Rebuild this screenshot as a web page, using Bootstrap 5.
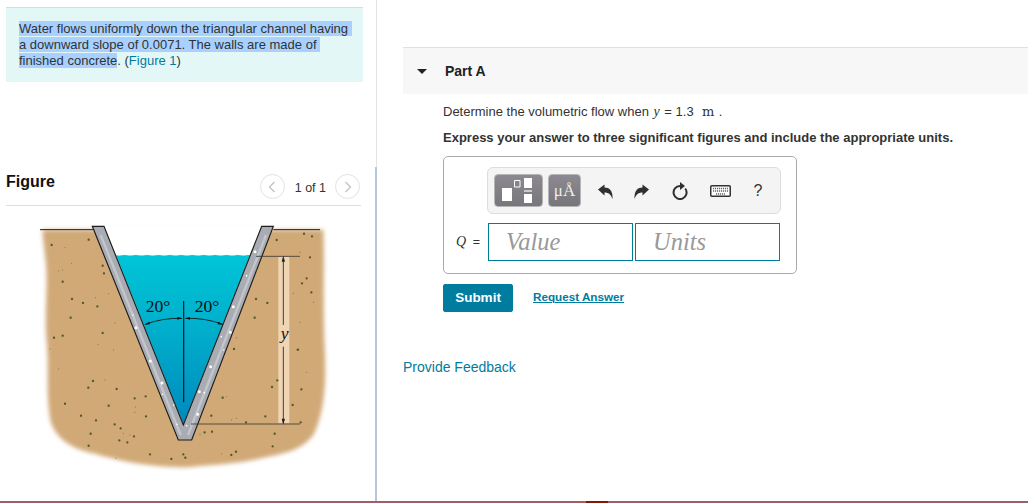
<!DOCTYPE html>
<html lang="en">
<head>
<meta charset="utf-8">
<title>Part A</title>
<link href="https://cdn.jsdelivr.net/npm/bootstrap@5.3.0/dist/css/bootstrap.min.css" rel="stylesheet">
<style>
html,body{height:503px;overflow:hidden;background:#fff}
body{font-family:"Liberation Sans",Arial,sans-serif;font-size:13px;line-height:16px;color:#333}
a{color:#007c9e;text-decoration:none}
.page-wrap{height:503px;border-bottom:2px solid #a55c64;position:relative}
.bar-accent{position:absolute;left:586px;bottom:-2px;width:22px;height:2px;background:#8a1500}
.left-pane{width:377px;flex:none}
.intro-zone{height:167px;padding:7px 13px 0 6px;border-right:1px solid #e3e3e3}
.intro-box{height:75px;background:#e3f7f6;border-top:1px solid #dcdcdc;padding:13px 8px 0 13px}
.sel{background:#a8d1ff}
.figure-zone{height:334px;padding:0 14px 0 6px;border-right:2px solid #b9c9dc}
.figure-head{height:39px;border-bottom:1px solid #ddd;padding-top:6px}
.figure-title{font-size:16px;font-weight:700;color:#111;line-height:18px}
.pager-dot{width:25px;height:25px;border:1px solid #e2e2e2;border-radius:50%;color:#bbb;display:flex;align-items:center;justify-content:center}
.pager-text{margin:2px 9px 0 10px;font-size:12.500px;line-height:25px}
.pager-box{margin-top:1px;margin-right:1px}
.figure-svg{display:block;margin:9px 0 0 24px}
.right-pane{padding:47px 0 0 26px}
.part-head{height:47px;background:#f7f7f7;border-top:1px solid #e0e0e0;padding-left:14px}
.part-tri{width:0;height:0;border-left:5.500px solid transparent;border-right:5.500px solid transparent;border-top:5px solid #222;margin-right:17px}
.part-title{font-weight:700;color:#222;font-size:14px;margin-left:1px}
.part-body{padding:10px 0 0 40px}
.q-line{margin:0 0 10px;line-height:16px}
.q-bold{font-weight:700;margin:0 0 10px;line-height:16px;color:#333}
.m-serif{font-family:"Liberation Serif",serif;font-style:italic;font-size:14px;margin:0 1px}
.m-unit{font-family:"DejaVu Serif","Liberation Serif",serif;font-size:13px;margin:0 1px}
.answer-box{width:354px;height:118px;border:1px solid #aaa;border-radius:5px;padding:10px 15px 0 43px}
.tool-bar{width:294px;height:47px;background:#f4f4f4;border:1px solid #ddd;border-radius:6px;padding:6px 0 0 6px}
.tool-btn{height:33px;border:1px solid #b5b5b5;border-radius:4px;background:linear-gradient(#8c8a90,#77767b);padding:0;display:flex;align-items:center;justify-content:center;color:#eee}
.tool-a{width:49px}
.tool-b{width:33px;margin-left:5px;font-family:"Liberation Serif",serif;font-size:17px;line-height:1}
.tool-set{margin:-5px 0 0 17px;width:166px}
.tool-q{font-size:16px;color:#333;width:12px}
.q-label{width:44px;margin-left:-43px;text-align:right;padding-right:8px;font-size:12.500px;white-space:nowrap;word-spacing:2px}
.entry-row{margin-top:9px}
.entry-cell{width:145px;height:38px;border:1px solid #007c9e;font-family:"Liberation Serif",serif;font-style:italic;font-size:24.500px;line-height:36px;color:#999;padding-left:17px}
.entry-gap{margin-left:2px}
.submit-btn{--bs-btn-bg:#007c9e;--bs-btn-color:#fff;--bs-btn-border-color:#007c9e;--bs-btn-hover-bg:#007c9e;--bs-btn-hover-border-color:#007c9e;--bs-btn-hover-color:#fff;width:70px;height:28px;padding:0;font-size:13.500px;font-weight:700;border-radius:2px;line-height:26px}
.request-link{font-size:11.700px;font-weight:700;text-decoration:underline;margin-left:20px;margin-top:5px}
.action-row{margin-top:10px}
.feedback{display:block;font-size:14px;line-height:18px;margin:46px 0 0 -40px}
.fig-label{font-family:"Liberation Serif",serif;font-size:53px;fill:#111}
</style>
</head>
<body>
<div class="page-wrap d-flex">
  <div class="left-pane">
    <div class="intro-zone">
      <div class="intro-box">
        <span class="sel">Water flows uniformly down the triangular channel having&nbsp;<br>a downward slope of 0.0071. The walls are made of&nbsp;<br>finished concrete</span>. (<a href="#">Figure 1</a>)
      </div>
    </div>
    <div class="figure-zone">
      <div class="figure-head d-flex justify-content-between">
        <div class="figure-title">Figure</div>
        <div class="pager-box d-flex align-items-start">
          <div class="pager-dot"><svg width="8" height="12" viewBox="0 0 8 12"><path d="M6.500 1 1.500 6l5 5" fill="none" stroke="#c4c4c4" stroke-width="1.400"/></svg></div>
          <div class="pager-text">1 of 1</div>
          <div class="pager-dot"><svg width="8" height="12" viewBox="0 0 8 12"><path d="M1.500 1l5 5-5 5" fill="none" stroke="#c4c4c4" stroke-width="1.400"/></svg></div>
        </div>
      </div>
      <svg class="figure-svg" width="300" height="270" viewBox="0 0 900 810">
        <defs>
          <linearGradient id="wat" x1="0" y1="0" x2="0" y2="1"><stop offset="0" stop-color="#00c5d8"/><stop offset=".45" stop-color="#00aecb"/><stop offset="1" stop-color="#0089bd"/></linearGradient>
          <filter id="soft" x="-5%" y="-5%" width="110%" height="110%"><feGaussianBlur stdDeviation="6"/></filter>
        </defs>
        <path d="M38 44H880C884 150 878 250 884 400C890 520 880 600 850 660C810 710 760 715 700 728C640 745 560 748 480 756C380 760 280 742 190 715C120 700 80 670 62 620C46 540 58 470 50 380C42 300 56 200 46 130C42 90 38 70 38 44Z" fill="#d0a977" filter="url(#soft)"/>
        <path d="M222 34H695L460 630Z" fill="#fff"/>
        <path d="M258 120H660L460 628Z" fill="url(#wat)"/>
        <path d="M258 120q9 3 17 0t17 0 17 0 17 0 17 0 17 0 17 0 17 0 17 0 17 0 17 0 17 0 17 0 17 0 17 0 17 0 17 0 17 0 17 0 17 0 17 0 17 0 17 0 1 0" fill="none" stroke="#dff" stroke-width="2"/>
        <path d="M745 126H778V625H745Z" fill="#efd5b4"/>
        <path d="M187 34H222L460 630 695 34H730L485 675H445Z" fill="#a9adb3" stroke="#1d1d1d" stroke-width="3.500" stroke-linejoin="miter"/>
        <path d="M212 60 452 660M708 60 474 660" stroke="#c3c6cb" stroke-width="7" fill="none"/>
        <path d="M65 90h0M176 74h0M98 200h0M126 252h0M159 264h0M202 274h0M122 308h0M218 354h0M72 368h0M98 362h0M175 518h0M189 498h0M260 522h0M314 550h0M347 544h0M105 566h0M236 572h0M153 602h0M198 616h0M348 604h0M254 628h0M272 640h0M182 656h0M312 664h0M268 676h0M292 682h0M176 692h0M360 718h0M460 718h0M424 732h0M466 728h0M618 710h0M604 720h0M712 264h0M678 252h0M674 308h0M816 205h0M844 232h0M822 56h0M846 64h0M740 75h0M840 127h0M612 402h0M726 516h0M814 523h0M742 496h0M788 570h0M734 656h0M524 652h0M546 650h0M544 602h0M706 604h0M648 622h0M578 548h0M728 694h0M222 175h0M218 152h0M804 404h0M830 190h0M812 622h0" stroke="#4e5a2a" stroke-width="7" stroke-linecap="round" fill="none"/>
        <path d="M105 98h0M124 146h0M98 165h0M85 168h0M236 236h0M196 248h0M255 324h0M60 402h0M204 388h0M250 405h0M86 462h0M225 495h0M316 576h0M315 592h0M280 655h0M300 660h0M258 730h0M575 717h0M790 235h0M810 322h0M680 165h0M620 368h0M850 262h0M810 112h0M830 472h0M605 615h0M620 610h0M510 658h0M800 404h0M590 545h0" stroke="#6b6a3c" stroke-width="3" stroke-linecap="round" fill="none"/>
        <path d="M318 338h0M361 438h0M396 504h0M503 598h0M610 275h0M675 110h0M542 455h0M508 530h0M601 352h0" stroke="#fff" stroke-width="9" stroke-linecap="round" fill="none"/>
        <path d="M309 300h0M397 538h0M441 628h0M581 405h0M574 365h0M650 182h0M523 533h0M470 632h0M431 570h0" stroke="#fff" stroke-width="5" stroke-linecap="round" fill="none"/>
        <path d="M30 44H190M730 44H870" stroke="#1d1d1d" stroke-width="3" fill="none"/>
        <path d="M678 124H810M483 627H810" stroke="#3a3a32" stroke-width="2.500" fill="none"/>
        <path d="M760 128V330M760 395V625" stroke="#222" stroke-width="2.500" fill="none"/>
        <path d="M760 122 755 140H765ZM760 629 755 611H765Z" fill="#222"/>
        <path d="M461 258V562" stroke="#111" stroke-width="3.500" fill="none"/>
        <path d="M345 328Q400 308 456 310M466 310Q525 308 578 328" stroke="#111" stroke-width="2.500" fill="none"/>
        <path d="M343 329 358 320 360 328ZM456 310 442 306 442 314ZM466 310 480 306 480 314ZM580 329 565 320 563 328Z" fill="#111"/>
        <text class="fig-label" x="347" y="290">20°</text>
        <text class="fig-label" x="494" y="290">20°</text>
        <text class="fig-label" x="752" y="372" font-style="italic">y</text>
      </svg>
    </div>
  </div>
  <div class="right-pane flex-grow-1">
    <div class="part-head d-flex align-items-center">
      <div class="part-tri"></div>
      <div class="part-title">Part A</div>
    </div>
    <div class="part-body">
      <p class="q-line">Determine the volumetric flow when <span class="m-serif">y</span> = 1.3 &nbsp;<span class="m-unit">m</span> .</p>
      <p class="q-bold">Express your answer to three significant figures and include the appropriate units.</p>
      <div class="answer-box">
        <div class="tool-bar d-flex">
          <button type="button" class="btn tool-btn tool-a" aria-label="Templates">
            <svg width="38" height="30" viewBox="0 0 38 30"><path d="M2 12H12V25H2ZM24 2H32V12H24ZM24 18H32V27H24Z" fill="#fff"/><path d="M14.500 4.500H20V11H14.500Z" fill="none" stroke="#fff"/><path d="M24 15H32" stroke="#fff" stroke-width="1.200"/></svg>
          </button>
          <button type="button" class="btn tool-btn tool-b" aria-label="Symbols">μÅ</button>
          <div class="tool-set d-flex align-items-center justify-content-between">
            <svg width="15" height="15" viewBox="0 0 15 15"><path d="M0 5.500 6.500.5V3.500C11 3.500 15 6 14.500 15 13 10.500 10.500 8.500 6.500 8.500V11.500Z" fill="#2f2f2f"/></svg>
            <svg width="15" height="15" viewBox="0 0 15 15"><path d="M15 5.500 8.500.5V3.500C4 3.500 0 6 .5 15 2 10.500 4.500 8.500 8.500 8.500V11.500Z" fill="#2f2f2f"/></svg>
            <svg width="18" height="18" viewBox="0 0 18 18"><path d="M14.200 6.500A6.500 6.500 0 1 1 9 4" fill="none" stroke="#2f2f2f" stroke-width="2"/><path d="M9 0V8L14 4Z" fill="#2f2f2f"/></svg>
            <svg width="21" height="12" viewBox="0 0 21 12"><rect x=".75" y=".75" width="19.500" height="10.500" rx="1" fill="#fff" stroke="#333" stroke-width="1.500"/><path d="M3 3.500h15M3 6h15M6 9h9" stroke="#666" stroke-width="1.300" stroke-dasharray="1.200 .8" fill="none"/></svg>
            <div class="tool-q text-center">?</div>
          </div>
        </div>
        <div class="entry-row d-flex align-items-center">
          <div class="q-label"><span class="m-serif">Q</span> =</div>
          <div class="entry-cell">Value</div>
          <div class="entry-cell entry-gap">Units</div>
        </div>
      </div>
      <div class="action-row d-flex align-items-start">
        <button type="button" class="btn submit-btn">Submit</button>
        <a href="#" class="request-link">Request Answer</a>
      </div>
      <a href="#" class="feedback">Provide Feedback</a>
    </div>
  </div>
  <div class="bar-accent"></div>
</div>
<script src="https://cdn.jsdelivr.net/npm/bootstrap@5.3.0/dist/js/bootstrap.bundle.min.js"></script>
</body>
</html>
